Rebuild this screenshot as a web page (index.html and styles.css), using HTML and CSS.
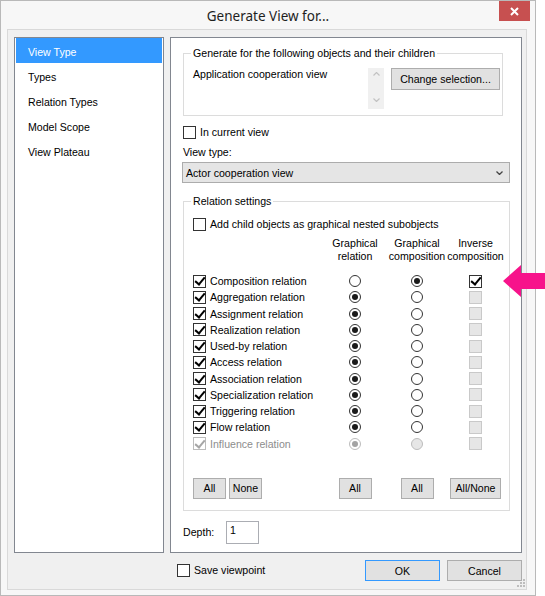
FILE: index.html
```html
<!DOCTYPE html>
<html>
<head>
<meta charset="utf-8">
<link rel="stylesheet" href="styles.css">
</head>
<body>
<div class="window">
  <div class="titlebar">
    <span class="title">Generate View for...</span>
    <div class="close"><svg width="9" height="9" viewBox="0 0 9 9"><path d="M1 1 L8 8 M8 1 L1 8" stroke="#fff" stroke-width="2" fill="none"/></svg></div>
  </div>
  <div class="client">
    <div class="panels">
      <ul class="nav">
        <li class="sel">View Type</li>
        <li>Types</li>
        <li>Relation Types</li>
        <li>Model Scope</li>
        <li>View Plateau</li>
      </ul>
      <div class="main">
        <fieldset class="group g1">
          <legend>Generate for the following objects and their children</legend>
          <div class="g1-row">
            <span class="objname">Application cooperation view</span>
            <div class="scroll">
              <svg width="7" height="4" viewBox="0 0 7 4"><path d="M0.5 3.5 L3.5 0.5 L6.5 3.5" stroke="#c2c2c2" stroke-width="1.2" fill="none"/></svg>
              <svg width="7" height="4" viewBox="0 0 7 4"><path d="M0.5 0.5 L3.5 3.5 L6.5 0.5" stroke="#c2c2c2" stroke-width="1.2" fill="none"/></svg>
            </div>
            <button class="btn change">Change selection...</button>
          </div>
        </fieldset>
        <div class="chk-line incur"><span class="cb"></span><span>In current view</span></div>
        <div class="vt-label">View type:</div>
        <div class="combo"><span>Actor cooperation view</span><svg width="7" height="4" viewBox="0 0 7 4"><path d="M0.5 0.5 L3.5 3.5 L6.5 0.5" stroke="#444" stroke-width="1.3" fill="none"/></svg></div>
        <fieldset class="group rel">
          <legend>Relation settings</legend>
          <div class="chk-line"><span class="cb"></span><span>Add child objects as graphical nested subobjects</span></div>
          <div class="cols heads">
            <div></div>
            <div class="hd"><span>Graphical<br>relation</span></div>
            <div class="hd"><span>Graphical<br>composition</span></div>
            <div class="hd"><span>Inverse<br>composition</span></div>
          </div>
          <div class="cols rows">
            <div class="lbl"><span class="cb on"></span><span>Composition relation</span></div>
            <div class="c"><span class="rd"></span></div>
            <div class="c"><span class="rd on"></span></div>
            <div class="c"><span class="cb on"></span></div>

            <div class="lbl"><span class="cb on"></span><span>Aggregation relation</span></div>
            <div class="c"><span class="rd on"></span></div>
            <div class="c"><span class="rd"></span></div>
            <div class="c"><span class="cb off"></span></div>

            <div class="lbl"><span class="cb on"></span><span>Assignment relation</span></div>
            <div class="c"><span class="rd on"></span></div>
            <div class="c"><span class="rd"></span></div>
            <div class="c"><span class="cb off"></span></div>

            <div class="lbl"><span class="cb on"></span><span>Realization relation</span></div>
            <div class="c"><span class="rd on"></span></div>
            <div class="c"><span class="rd"></span></div>
            <div class="c"><span class="cb off"></span></div>

            <div class="lbl"><span class="cb on"></span><span>Used-by relation</span></div>
            <div class="c"><span class="rd on"></span></div>
            <div class="c"><span class="rd"></span></div>
            <div class="c"><span class="cb off"></span></div>

            <div class="lbl"><span class="cb on"></span><span>Access relation</span></div>
            <div class="c"><span class="rd on"></span></div>
            <div class="c"><span class="rd"></span></div>
            <div class="c"><span class="cb off"></span></div>

            <div class="lbl"><span class="cb on"></span><span>Association relation</span></div>
            <div class="c"><span class="rd on"></span></div>
            <div class="c"><span class="rd"></span></div>
            <div class="c"><span class="cb off"></span></div>

            <div class="lbl"><span class="cb on"></span><span>Specialization relation</span></div>
            <div class="c"><span class="rd on"></span></div>
            <div class="c"><span class="rd"></span></div>
            <div class="c"><span class="cb off"></span></div>

            <div class="lbl"><span class="cb on"></span><span>Triggering relation</span></div>
            <div class="c"><span class="rd on"></span></div>
            <div class="c"><span class="rd"></span></div>
            <div class="c"><span class="cb off"></span></div>

            <div class="lbl"><span class="cb on"></span><span>Flow relation</span></div>
            <div class="c"><span class="rd on"></span></div>
            <div class="c"><span class="rd"></span></div>
            <div class="c"><span class="cb off"></span></div>

            <div class="lbl dis"><span class="cb on dis"></span><span>Influence relation</span></div>
            <div class="c"><span class="rd on dis"></span></div>
            <div class="c"><span class="rd dis"></span></div>
            <div class="c"><span class="cb off"></span></div>
          </div>
          <div class="cols btnrow">
            <div class="pair"><button class="btn sm">All</button><button class="btn sm">None</button></div>
            <div class="c"><button class="btn sm">All</button></div>
            <div class="c"><button class="btn sm">All</button></div>
            <div class="c"><button class="btn wide">All/None</button></div>
          </div>
        </fieldset>
        <div class="depth"><span class="dlabel">Depth:</span><div class="input">1</div></div>
      </div>
    </div>
    <div class="footer">
      <div class="chk-line save"><span class="cb"></span><span>Save viewpoint</span></div>
      <button class="btn ok">OK</button>
      <button class="btn cancel">Cancel</button>
    </div>
    <svg class="grip" width="9" height="9" viewBox="0 0 9 9">
      <rect x="7" y="1" width="2" height="2" fill="#bdbdbd"/>
      <rect x="4" y="4" width="2" height="2" fill="#bdbdbd"/>
      <rect x="7" y="4" width="2" height="2" fill="#bdbdbd"/>
      <rect x="1" y="7" width="2" height="2" fill="#bdbdbd"/>
      <rect x="4" y="7" width="2" height="2" fill="#bdbdbd"/>
      <rect x="7" y="7" width="2" height="2" fill="#bdbdbd"/>
    </svg>
  </div>
</div>
<svg class="arrow" width="42" height="33" viewBox="0 0 42 33"><polygon points="0,16 18,0 18,8 42,8 42,24 18,24 18,32" fill="#f7138b"/></svg>
</body>
</html>
```
FILE: styles.css
```css
* { box-sizing: border-box; }
body {
  margin: 0;
  background: #fff;
  font-family: "Liberation Sans", Arial, sans-serif;
  font-size: 10.6px;
  color: #000;
}
.window {
  position: relative;
  width: 536px;
  height: 596px;
  border: 1px solid #b9b9b9;
  background: #f7f7f7;
  padding: 0 8px 5px 6px;
}
.titlebar {
  position: relative;
  height: 28px;
  margin: 0 -8px 0 -6px;
  text-align: center;
}
.title {
  font-family: "Noto Sans", "Open Sans", sans-serif;
  font-size: 13.5px;
  line-height: 30px;
  color: #1e1e1e;
}
.close {
  position: absolute;
  top: 0;
  right: 5px;
  width: 31px;
  height: 20px;
  background: #c75050;
  display: flex;
  align-items: center;
  justify-content: center;
}
.client {
  position: relative;
  height: 561px;
  border: 1px solid #d9d9d9;
  background: #f0f0f0;
  padding: 7px 4px 0 6px;
}
.panels {
  display: flex;
  gap: 6px;
  height: 516px;
}
.nav {
  width: 150px;
  margin: 0;
  padding: 0 1px;
  list-style: none;
  background: #fff;
  border: 1px solid #828790;
}
.nav li {
  height: 25px;
  padding: 4px 0 0 12px;
  line-height: 21px;
  white-space: nowrap;
}
.nav li.sel {
  background: #3399ff;
  color: #fff;
}
.main {
  flex: 1;
  background: #fff;
  border: 1px solid #828790;
}
.group {
  border: 1px solid #dcdcdc;
  min-width: 0;
}
.group legend {
  padding: 0 2px;
  margin-left: -2px;
  line-height: 14px;
  white-space: nowrap;
}
.g1 {
  margin: 8px 0 0 12px;
  width: 320px;
  padding: 8px 2px 6px 9px;
}
.g1-row {
  display: flex;
  align-items: flex-start;
}
.objname {
  flex: 1;
  line-height: 13px;
}
.scroll {
  width: 16px;
  height: 41px;
  margin-right: 7px;
  background: #f0f0f0;
  display: flex;
  flex-direction: column;
  align-items: center;
  justify-content: space-between;
  padding: 4px 0 7px;
}
.scroll svg { display: block; }
.btn {
  font: inherit;
  color: #000;
  border: 1px solid #adadad;
  background: #e1e1e1;
  padding: 0;
  margin: 0;
  text-align: center;
}
.btn.change { width: 109px; height: 22px; }
.chk-line {
  display: flex;
  align-items: center;
  gap: 4px;
  height: 13px;
  line-height: 13px;
  white-space: nowrap;
}
.incur { margin: 10px 0 0 12px; }
.vt-label {
  margin: 7px 0 0 12px;
  line-height: 13px;
}
.combo {
  margin: 3px 0 0 11px;
  width: 328px;
  height: 21px;
  border: 1px solid #acacac;
  background: #e5e5e5;
  display: flex;
  align-items: center;
  justify-content: space-between;
  padding: 0 6px 0 3px;
}
.combo svg { display: block; }
.rel {
  margin: 11px 0 0 12px;
  width: 327px;
  padding: 10px 6px 11px 9px;
}
.cols {
  display: grid;
  grid-template-columns: 132px 60px 64px 53px;
}
.heads {
  margin-top: 6px;
  height: 26px;
}
.hd {
  display: flex;
  justify-content: center;
  text-align: center;
  line-height: 13px;
  white-space: nowrap;
}
.rows {
  margin-top: 10px;
  grid-auto-rows: 16.25px;
}
.lbl {
  display: flex;
  align-items: center;
  gap: 4px;
  white-space: nowrap;
}
.lbl.dis { color: #8d8d8d; }
.c {
  display: flex;
  align-items: center;
  justify-content: center;
}
.cb {
  flex: none;
  width: 13px;
  height: 13px;
  border: 1px solid #333;
  background: #fff;
  display: flex;
  align-items: center;
  justify-content: center;
}
.cb.on::after {
  content: "";
  width: 4px;
  height: 8px;
  margin-top: -2px;
  border: solid #000;
  border-width: 0 2px 2px 0;
  transform: rotate(40deg);
}
.cb.off {
  background: #e6e6e6;
  border-color: #c9c9c9;
}
.cb.dis { border-color: #bcbcbc; }
.cb.dis.on::after { border-color: #a6a6a6; }
.rd {
  width: 12px;
  height: 12px;
  border: 1px solid #333;
  border-radius: 50%;
  background: #fff;
  display: flex;
  align-items: center;
  justify-content: center;
}
.rd.on::after {
  content: "";
  width: 6px;
  height: 6px;
  border-radius: 50%;
  background: #1a1a1a;
}
.rd.dis {
  border-color: #bcbcbc;
  background: #e6e6e6;
}
.rd.on.dis { background: #fff; }
.rd.on.dis::after { background: #a3a3a3; }
.btnrow {
  margin-top: 26px;
  height: 21px;
}
.pair {
  display: flex;
  gap: 3px;
}
.btn.sm { width: 33px; height: 21px; }
.btn.wide { width: 51px; height: 21px; }
.depth {
  margin: 10px 0 0 12px;
  display: flex;
  align-items: center;
  height: 23px;
}
.dlabel { width: 43px; }
.input {
  width: 33px;
  height: 23px;
  border: 1px solid #abadb3;
  background: #fff;
  padding: 2px 0 0 3px;
  line-height: 13px;
}
.footer {
  display: flex;
  align-items: center;
  margin-top: 7px;
  height: 21px;
}
.save { margin-left: 163px; }
.btn.ok {
  margin-left: auto;
  width: 75px;
  height: 21px;
  border-color: #3399ff;
}
.btn.cancel {
  margin-left: 7px;
  width: 75px;
  height: 21px;
}
.grip {
  position: absolute;
  right: 1px;
  bottom: 2px;
}
.arrow {
  position: absolute;
  left: 503px;
  top: 265px;
}
```
